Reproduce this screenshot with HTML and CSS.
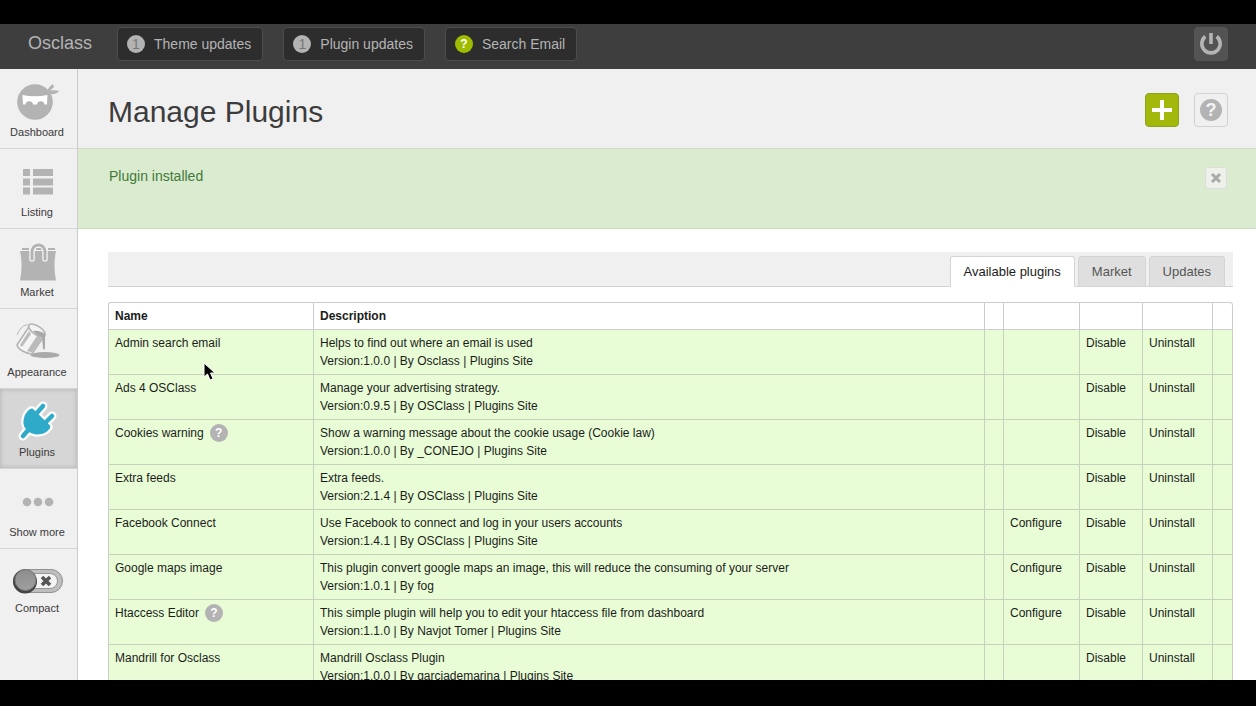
FILE: index.html
```html
<!DOCTYPE html>
<html lang="en">
<head>
<meta charset="utf-8">
<title>Manage Plugins</title>
<link rel="stylesheet" href="styles.css">
</head>
<body>
<div class="app">
  <header class="topbar">
    <a class="brand" href="#">Osclass</a>
    <nav class="shortcuts">
      <a class="shortcut" href="#"><span class="count">1</span>Theme updates</a>
      <a class="shortcut" href="#"><span class="count">1</span>Plugin updates</a>
      <a class="shortcut" href="#"><span class="count count-green">?</span>Search Email</a>
    </nav>
    <button class="square power" aria-label="Log out">
      <svg width="24" height="24" viewBox="0 0 24 24" fill="none" stroke="#b4b4b4" stroke-width="3.600"><path d="M6.300 4.500A9.200 9.200 0 1 0 17.700 4.500M12 1v11"/></svg>
    </button>
  </header>
  <div class="body">
    <nav class="sidebar">
      <a class="item" href="#">
        <svg class="icon" width="77" height="55" viewBox="0 0 77 55"><circle cx="35" cy="33" r="17.800" fill="#b3b3b3"/><path d="M46 24c2-5 5-8 7-9l1 3-4 3.500c3-.5 6-.5 9 .5-2 3-6 3.500-10 3z" fill="#b3b3b3"/><path d="M22.500 26q12.500 2.500 25 0l-.5 9.500h-2.500a3.800 3.800 0 0 0-7.500 0h-4a3.800 3.800 0 0 0-7.500 0H23z" fill="#fff"/></svg>
        <span>Dashboard</span></a>
      <a class="item" href="#">
        <svg class="icon" width="77" height="55" viewBox="0 0 77 55" fill="#b3b3b3"><path d="M23 20h7v7h-7zM33 20h20v7H33zM23 29.500h7v7h-7zM33 29.500h20v7H33zM23 38.500h7v7h-7zM33 38.500h20v7H33z"/></svg>
        <span>Listing</span></a>
      <a class="item" href="#">
        <svg class="icon" width="77" height="55" viewBox="0 0 77 55"><path d="M20 22h36c-2 9-2 20 0 29.500H20c2-9.500 2-20.500 0-29.500zM22 19h7v2h-7zM48 19h7v2h-7zM36 19h6v2h-6z" fill="#b3b3b3"/><path d="M32 30v-7.500a6.500 6.500 0 0 1 13 0V30" fill="none" stroke="#f5f5f5" stroke-width="5.500" stroke-linecap="round"/><path d="M32 30v-7.500a6.500 6.500 0 0 1 13 0V30" fill="none" stroke="#b3b3b3" stroke-width="3" stroke-linecap="round"/></svg>
        <span>Market</span></a>
      <a class="item" href="#">
        <svg class="icon" width="77" height="55" viewBox="0 0 77 55"><ellipse cx="45" cy="46" rx="14.500" ry="3" fill="#aaa"/><path d="M29.500 17 17 36c1 4 9 9 15 9l12-18" fill="#f4f4f4" stroke="#b3b3b3" stroke-width="1.500"/><path d="m37 27-10 15 5 1.500 10-14.500zM29 22l-9 14 2 2 9-13z" fill="#bbb"/><ellipse cx="37" cy="21.500" rx="9.500" ry="4.300" transform="rotate(34 37 21.500)" fill="#f4f4f4" stroke="#b3b3b3" stroke-width="1.500"/><path d="M33 22c5-1 9 1 12 3v14c0 2-1.500 2-2 0l-1-11c-4-1-7-3-9-6z" fill="#a9a9a9"/><path d="M29 16c-6-1-9 4-12 10" fill="none" stroke="#b9b9b9"/></svg>
        <span>Appearance</span></a>
      <a class="item active" href="#" aria-current="page">
        <svg class="icon" width="77" height="55" viewBox="0 0 77 55"><defs><g id="plug" stroke-linecap="round" stroke-linejoin="round"><path d="M31 22 48 38C44 44 35 45 29 40S26 26 31 22z"/><path d="m36 25 7-8M45 34l7-7" fill="none"/><path d="m32 22 16 16M30 39l-7 8" fill="none"/></g></defs><use href="#plug" fill="#fff" stroke="#fff" stroke-width="9"/><use href="#plug" fill="#2fabc9" stroke="#2fabc9" stroke-width="4.500"/></svg>
        <span>Plugins</span></a>
      <a class="item" href="#">
        <svg class="icon" width="77" height="55" viewBox="0 0 77 55" fill="#b3b3b3"><circle cx="27" cy="33" r="4.300"/><circle cx="38" cy="33" r="4.300"/><circle cx="49" cy="33" r="4.300"/></svg>
        <span>Show more</span></a>
      <label class="item compact">
        <input class="hidden-check" type="checkbox">
        <svg class="icon" width="77" height="51" viewBox="0 0 77 51"><defs><linearGradient id="knob" x2="0" y2="1"><stop stop-color="#8c8c8c"/><stop offset="1" stop-color="#a0a0a0"/></linearGradient></defs><rect x="13.500" y="20.500" width="49" height="23" rx="11.500" fill="#bebebe" stroke="#929292"/><rect x="20.500" y="24.500" width="37" height="15" rx="7.500" fill="#f4f4f4" stroke="#969696"/><circle cx="25" cy="32.500" r="12" fill="#444"/><circle cx="25.500" cy="31" r="10.500" fill="url(#knob)" stroke="#777"/><path d="m42 28 8 8m0-8-8 8" stroke="#555" stroke-width="3.600"/></svg>
        <span>Compact</span></label>
    </nav>
    <main class="main">
      <div class="titlebar">
        <h1>Manage Plugins</h1>
        <button class="square add" aria-label="Add plugin"><svg width="20" height="20" viewBox="0 0 20 20"><path d="M8 0h4v8h8v4h-8v8H8v-8H0V8h8z" fill="#fff"/></svg></button>
        <button class="square help" aria-label="Help"><span class="question">?</span></button>
      </div>
      <div class="alert" role="status">
        <p>Plugin installed</p>
        <button class="close" aria-label="Close"><svg width="12" height="12" viewBox="0 0 12 12"><path d="m2 2 8 8m0-8-8 8" stroke="#aaa" stroke-width="3"/></svg></button>
      </div>
      <div class="content">
        <nav class="tabs">
          <a class="tab selected" href="#">Available plugins</a>
          <a class="tab" href="#">Market</a>
          <a class="tab" href="#">Updates</a>
        </nav>
        <table class="plugins">
          <colgroup><col class="c-name"><col><col class="c-gap"><col class="c-conf"><col class="c-dis"><col class="c-un"><col class="c-end"></colgroup>
          <thead><tr><th>Name</th><th>Description</th><th></th><th></th><th></th><th></th><th></th></tr></thead>
          <tbody>
            <tr><td>Admin search email</td><td>Helps to find out where an email is used<br>Version:1.0.0 | By <a href="#">Osclass</a> | <a href="#">Plugins Site</a></td><td></td><td></td><td><a href="#">Disable</a></td><td><a href="#">Uninstall</a></td><td></td></tr>
            <tr><td>Ads 4 OSClass</td><td>Manage your advertising strategy.<br>Version:0.9.5 | By <a href="#">OSClass</a> | <a href="#">Plugins Site</a></td><td></td><td></td><td><a href="#">Disable</a></td><td><a href="#">Uninstall</a></td><td></td></tr>
            <tr><td><div class="name">Cookies warning<span class="hint">?</span></div></td><td>Show a warning message about the cookie usage (Cookie law)<br>Version:1.0.0 | By <a href="#">_CONEJO</a> | <a href="#">Plugins Site</a></td><td></td><td></td><td><a href="#">Disable</a></td><td><a href="#">Uninstall</a></td><td></td></tr>
            <tr><td>Extra feeds</td><td>Extra feeds.<br>Version:2.1.4 | By <a href="#">OSClass</a> | <a href="#">Plugins Site</a></td><td></td><td></td><td><a href="#">Disable</a></td><td><a href="#">Uninstall</a></td><td></td></tr>
            <tr><td>Facebook Connect</td><td>Use Facebook to connect and log in your users accounts<br>Version:1.4.1 | By <a href="#">OSClass</a> | <a href="#">Plugins Site</a></td><td></td><td><a href="#">Configure</a></td><td><a href="#">Disable</a></td><td><a href="#">Uninstall</a></td><td></td></tr>
            <tr><td>Google maps image</td><td>This plugin convert google maps an image, this will reduce the consuming of your server<br>Version:1.0.1 | By fog</td><td></td><td><a href="#">Configure</a></td><td><a href="#">Disable</a></td><td><a href="#">Uninstall</a></td><td></td></tr>
            <tr><td><div class="name">Htaccess Editor<span class="hint">?</span></div></td><td>This simple plugin will help you to edit your htaccess file from dashboard<br>Version:1.1.0 | By <a href="#">Navjot Tomer</a> | <a href="#">Plugins Site</a></td><td></td><td><a href="#">Configure</a></td><td><a href="#">Disable</a></td><td><a href="#">Uninstall</a></td><td></td></tr>
            <tr><td>Mandrill for Osclass</td><td>Mandrill Osclass Plugin<br>Version:1.0.0 | By <a href="#">garciademarina</a> | <a href="#">Plugins Site</a></td><td></td><td></td><td><a href="#">Disable</a></td><td><a href="#">Uninstall</a></td><td></td></tr>
          </tbody>
        </table>
      </div>
    </main>
  </div>
</div>
<svg class="cursor" width="14" height="20" viewBox="0 0 14 20"><path d="M1 1v14l3.500-3 2.500 6 3-1.300L7.500 11H12z" fill="#000" stroke="#fff"/></svg>
</body>
</html>
```

FILE: styles.css
```css
* { box-sizing: border-box; }
body {
  margin: 0;
  height: 100vh;
  padding: 24px 0 26px;
  background: #000;
  font: 12px/18px "Liberation Sans", Arial, sans-serif;
  color: #1c1c1c;
  overflow: hidden;
}
a { color: inherit; text-decoration: none; }
button { padding: 0; font: inherit; cursor: pointer; }
svg { display: block; }

.app { height: 100%; display: flex; flex-direction: column; overflow: hidden; background: #fff; }

.topbar {
  flex: none;
  display: flex;
  height: 45px;
  padding: 3px 28px 0;
  background: #3e3e3e;
  color: #b4b4b4;
}
.brand { font-size: 18px; line-height: 32px; }
.shortcuts { flex: 1; display: flex; gap: 20px; margin-left: 25px; }
.shortcut {
  display: flex;
  align-items: center;
  height: 34px;
  padding: 0 11px 0 9px;
  border: 1px solid #4d4d4d;
  border-radius: 4px;
  background: #2d2d2d;
  font-size: 14px;
}
.count {
  width: 18px;
  height: 18px;
  margin-right: 9px;
  border-radius: 50%;
  background: #b3b3b3;
  color: #777;
  line-height: 18px;
  text-align: center;
}
.count-green { background: #9fbc00; color: #fff; font-size: 12px; font-weight: bold; }

.square {
  flex: none;
  display: flex;
  align-items: center;
  justify-content: center;
  width: 34px;
  height: 34px;
  border: 1px solid #d2d2d2;
  border-radius: 4px;
  background: #f0f0f0;
}
.power { border-color: #555; background: #535353; }
.add { border-color: #8ea31c; background: #a2b90c; }
.question {
  width: 22px;
  height: 22px;
  border-radius: 50%;
  background: #b3b3b3;
  color: #f5f5f5;
  font-size: 18px;
  font-weight: bold;
  line-height: 22px;
}

.body { flex: 1; display: flex; min-height: 0; }
.sidebar { flex: none; width: 78px; border-right: 1px solid #ccc; background: #f0f0f0; }
.item {
  display: block;
  height: 80px;
  border-bottom: 1px solid #d6d6d6;
  color: #3a3a3a;
  font-size: 11px;
  line-height: 16px;
  text-align: center;
}
.item span { display: block; margin-right: 3px; }
.active { background: #d6d6d6; box-shadow: inset 0 0 5px #b0b0b0; }
.compact { border-bottom: 0; }
.hidden-check { position: absolute; opacity: 0; }

.main { flex: 1; min-width: 0; }
.titlebar {
  display: flex;
  align-items: center;
  gap: 15px;
  height: 80px;
  padding: 2px 28px 0 30px;
  border-bottom: 1px solid #cfdac8;
  background: #f0f0f0;
}
h1 { flex: 1; margin: 0; padding-top: 4px; font-size: 30px; font-weight: normal; line-height: 40px; color: #3c3c3c; }
.alert {
  display: flex;
  justify-content: space-between;
  height: 80px;
  padding: 18px 29px 0 31px;
  border-bottom: 1px solid #cbdcc0;
  background: #dbebcf;
  color: #407a3a;
  font-size: 14px;
}
.alert p { margin: 0; }
.close {
  display: grid;
  place-items: center;
  width: 22px;
  height: 22px;
  border: 1px solid #dcdcdc;
  border-radius: 3px;
  background: #eef0ea;
}

.content { padding: 23px 23px 0 30px; }
.tabs {
  display: flex;
  justify-content: flex-end;
  gap: 3px;
  height: 35px;
  padding: 4px 8px 0 0;
  margin-bottom: 15px;
  border-bottom: 1px solid #d2d2d2;
  background: #f0f0f0;
}
.tab {
  height: 31px;
  padding: 0 13px;
  border: 1px solid #d4d4d4;
  border-radius: 3px 3px 0 0;
  background: #dfdfdf;
  color: #555;
  font-size: 13px;
  line-height: 30px;
}
.selected { border-bottom-color: #fff; background: #fff; color: #1c1c1c; }

.plugins {
  width: 100%;
  table-layout: fixed;
  border-spacing: 0;
  border: 1px solid #ccc;
  border-width: 1px 0 0 1px;
  border-radius: 3px 3px 0 0;
}
.c-name { width: 205px; }
.c-gap { width: 19px; }
.c-conf { width: 76px; }
.c-dis { width: 63px; }
.c-un { width: 70px; }
.c-end { width: 20px; }
th, td {
  height: 27px;
  padding: 4px 6px;
  border: 1px solid #c6d2be;
  border-width: 0 1px 1px 0;
  text-align: left;
  vertical-align: top;
}
th { border-color: #ccc; }
th:last-child { border-top-right-radius: 3px; }
td { background: #e8fcd5; }
.name { display: flex; align-items: center; }
.hint {
  width: 18px;
  height: 18px;
  margin-left: 6px;
  border-radius: 50%;
  background: #b3b3b3;
  color: #fff;
  font-weight: bold;
  text-align: center;
}
.cursor { position: absolute; left: 203px; top: 362px; }
```
